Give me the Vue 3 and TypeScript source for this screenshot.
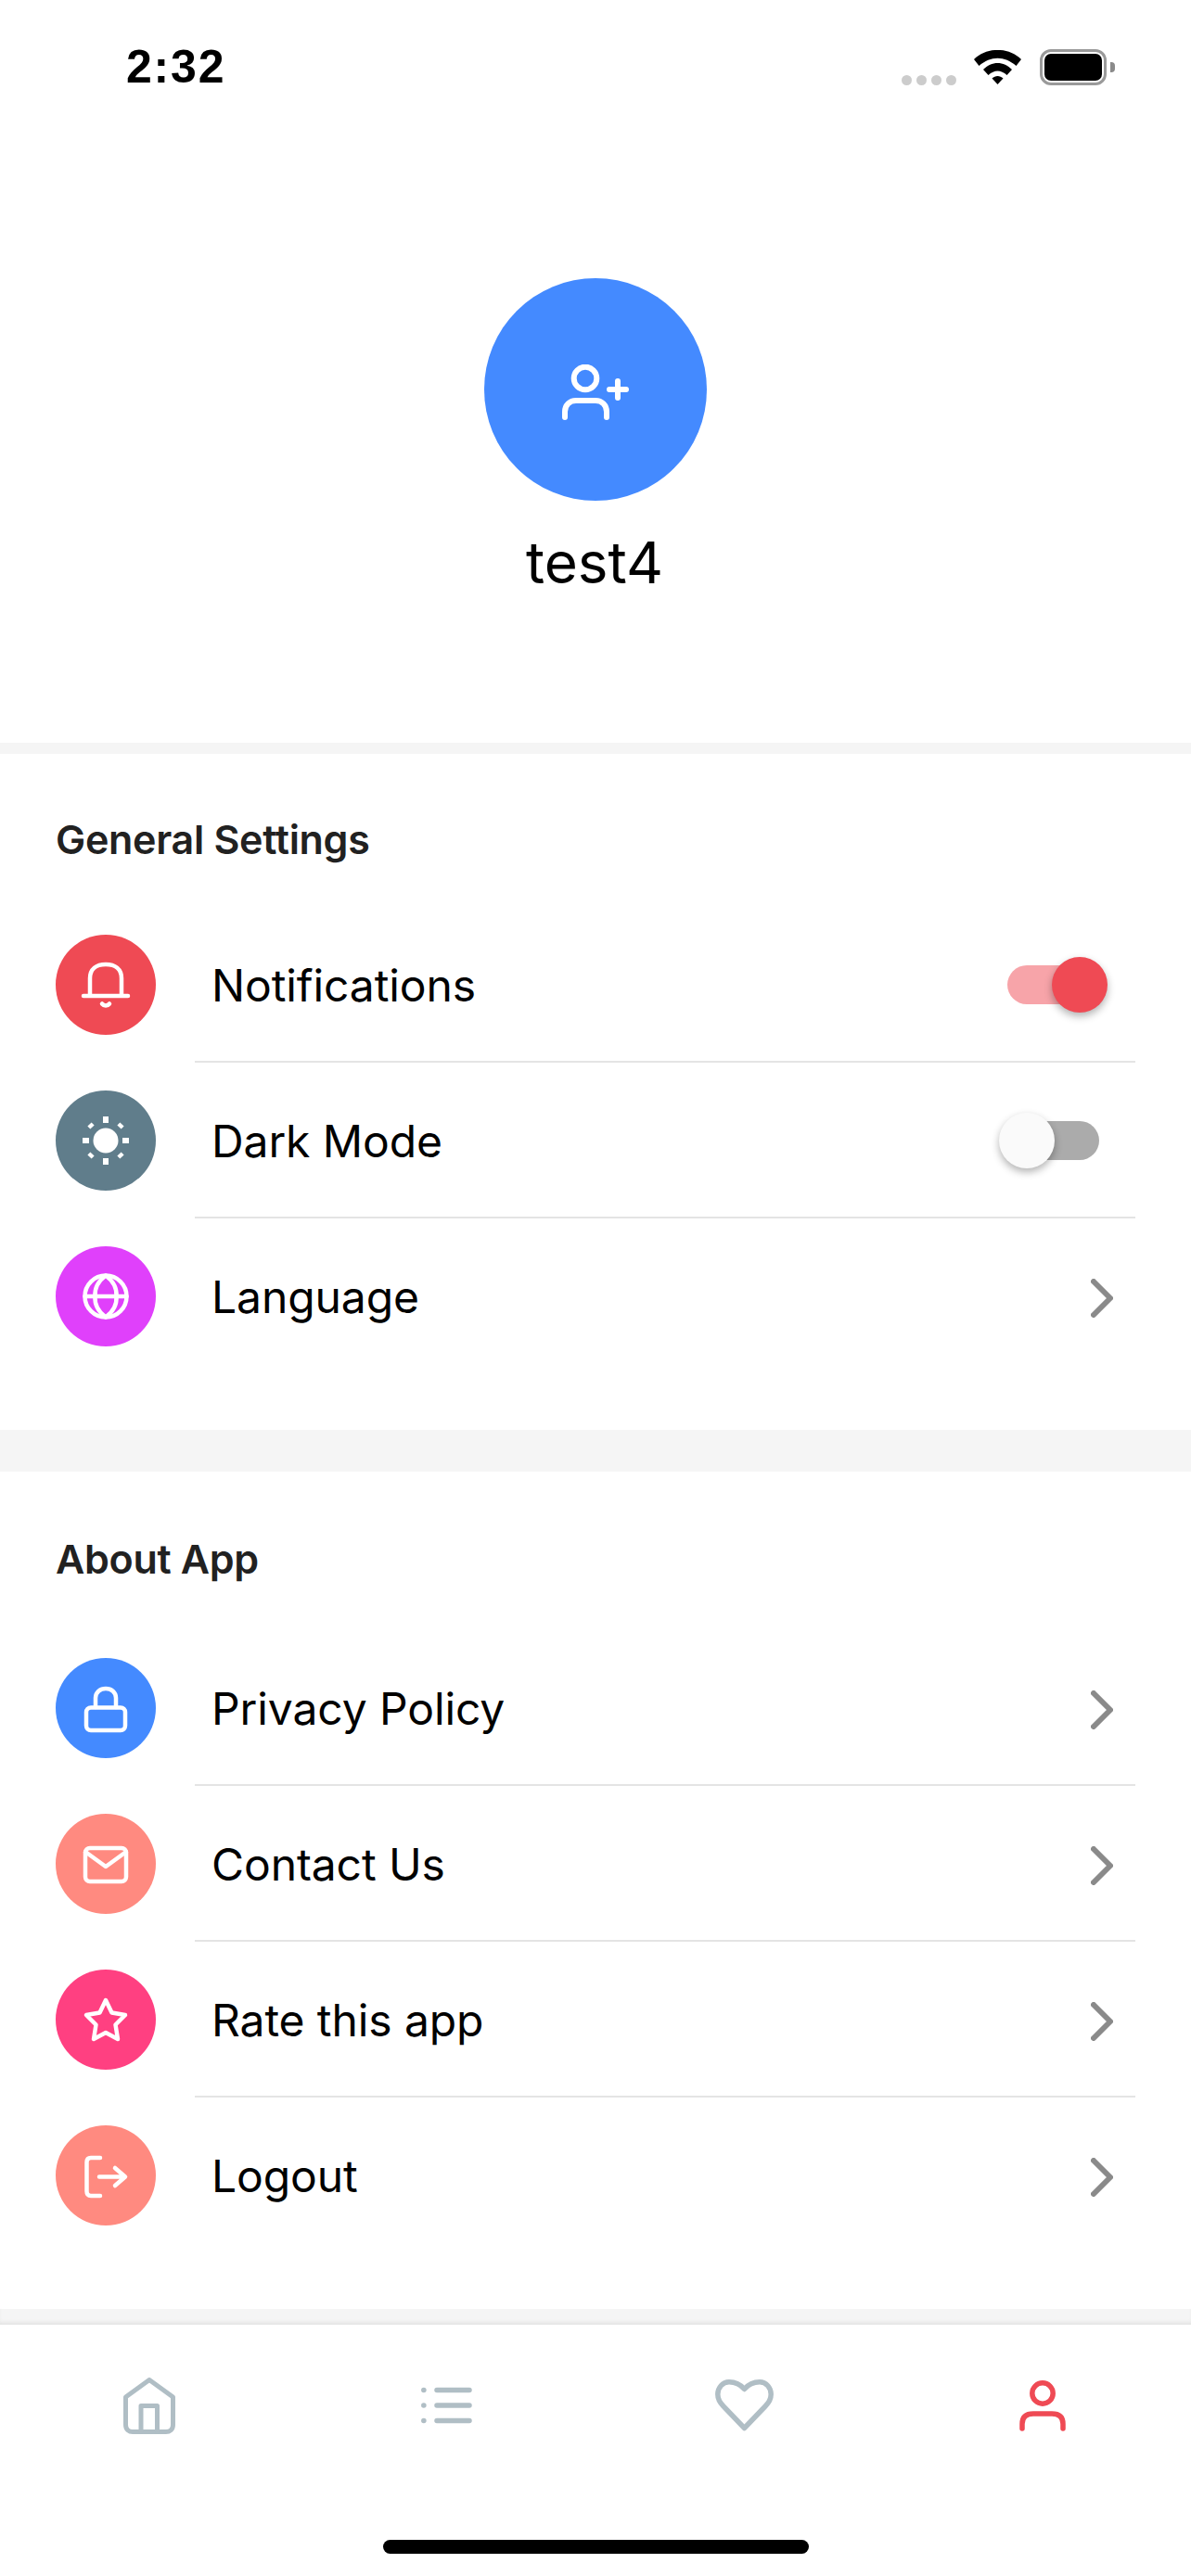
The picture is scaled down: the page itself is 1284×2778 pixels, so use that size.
<script setup lang="ts">
type Row = { label: string; color: string; icon: string; control: 'on' | 'off' | 'chevron' }

const generalRows: Row[] = [
  { label: 'Notifications', color: '#ef4a54', icon: 'bell', control: 'on' },
  { label: 'Dark Mode', color: '#607d8b', icon: 'sun', control: 'off' },
  { label: 'Language', color: '#e040fb', icon: 'globe', control: 'chevron' },
]
const aboutRows: Row[] = [
  { label: 'Privacy Policy', color: '#448aff', icon: 'lock', control: 'chevron' },
  { label: 'Contact Us', color: '#ff8a80', icon: 'mail', control: 'chevron' },
  { label: 'Rate this app', color: '#ff4081', icon: 'star', control: 'chevron' },
  { label: 'Logout', color: '#ff8a80', icon: 'logout', control: 'chevron' },
]
const sections = [
  { title: 'General Settings', rows: generalRows },
  { title: 'About App', rows: aboutRows },
]
</script>

<template>
  <div class="screen">
    <div class="status">
      <span class="time">2:32</span>
      <div class="status-icons">
        <div class="signal"><i></i><i></i><i></i><i></i></div>
        <svg class="wifi" width="51" height="37" viewBox="0 0 51 37">
          <path d="M0 10C14 -3.500 37 -3.500 51 10L45.500 17C33 6 18 6 5.500 17Z" fill="#000" />
          <path d="M10 21C19 11.500 32 11.500 41 21L35.500 27C29 21 22 21 15.500 27Z" fill="#000" />
          <path d="M19.500 30.500C23 27 28 27 31.500 30.500L25.500 37Z" fill="#000" />
        </svg>
        <div class="battery"><div class="battery-fill"></div></div>
        <div class="battery-cap"></div>
      </div>
    </div>

    <header class="profile">
      <div class="avatar">
        <svg class="avatar-icon" width="72" height="60" viewBox="0 0 72 60" fill="none" stroke="#fff" stroke-width="6" stroke-linecap="round">
          <circle cx="25" cy="15" r="12.300" />
          <path d="M3 57V51C3 44 8 39 15 39H36C43 39 48 44 48 51V57" />
          <path d="M60 18V36M51 27H69" />
        </svg>
      </div>
      <div class="name">test4</div>
    </header>

    <div class="band band-thin"></div>

    <template v-for="(section, si) in sections" :key="section.title">
      <section class="section" :class="{ 'section-about': si === 1 }">
        <h2 class="title">{{ section.title }}</h2>
        <div class="rows">
          <div v-for="(row, ri) in section.rows" :key="row.label" class="row">
            <div class="badge" :style="{ background: row.color }">
              <svg width="54" height="54" viewBox="0 0 54 54" fill="none" stroke="#fff" stroke-width="4.500" stroke-linecap="round" stroke-linejoin="round">
                <template v-if="row.icon === 'bell'">
                  <path d="M3 39H51M10 39V20C10 10 17 5 27 5C37 5 44 10 44 20V39" />
                  <path d="M23 47.500C25 50 29 50 31 47.500" />
                </template>
                <template v-else-if="row.icon === 'sun'">
                  <circle cx="27" cy="27" r="13.500" fill="#fff" stroke="none" />
                  <path d="M27 1V8M27 46V53M2 27H9M45 27H52M9.500 9.500L12.500 12.500M41.500 41.500L44.500 44.500M9.500 44.500L12.500 41.500M41.500 12.500L44.500 9.500" stroke-linecap="butt" stroke-width="6" />
                </template>
                <template v-else-if="row.icon === 'globe'">
                  <circle cx="27" cy="27" r="22.500" />
                  <path d="M27 4.500C17 12 15 20 15.500 27C15 34 17 42 27 49.500C37 42 39 34 38.500 27C39 20 37 12 27 4.500Z" />
                  <path d="M4.500 27H49.500" />
                </template>
                <template v-else-if="row.icon === 'lock'">
                  <rect x="6" y="26.500" width="42" height="24.500" rx="5" />
                  <path d="M16 26V16C16 10 21 6 27 6C33 6 38 10 38 16V26" />
                </template>
                <template v-else-if="row.icon === 'mail'">
                  <rect x="5" y="10" width="44" height="36" rx="5" />
                  <path d="M5 14L27 30L49 14" />
                </template>
                <template v-else-if="row.icon === 'star'">
                  <path d="M27 6L33.500 19.500L48 22L37.500 32.500L40 48L27 41L14 48L16.500 32.500L6 22L20.500 19.500Z" />
                </template>
                <template v-else>
                  <path d="M21 8H11C8 8 6.500 10 6.500 13V44C6.500 47 8 49 11 49H21" />
                  <path d="M20 28.500H47M37 19L48 28.500L37 38" />
                </template>
              </svg>
            </div>
            <div class="row-body" :class="{ 'no-line': ri === section.rows.length - 1 }">
              <span class="label">{{ row.label }}</span>
              <div v-if="row.control !== 'chevron'" class="switch" :class="row.control">
                <div class="knob"></div>
              </div>
              <svg v-else class="chevron" width="24" height="42" viewBox="0 0 24 42" fill="none" stroke="#8a8a8a" stroke-width="6" stroke-linecap="round" stroke-linejoin="round">
                <path d="M3 3L21 21L3 39" />
              </svg>
            </div>
          </div>
        </div>
      </section>
      <div v-if="si === 0" class="band band-wide"></div>
    </template>

    <div class="band band-foot"></div>

    <nav class="tabs">
      <div class="tab">
        <svg width="56" height="61" viewBox="0 0 56 61" fill="none" stroke="#b0bec5" stroke-width="5" stroke-linecap="round" stroke-linejoin="round">
          <path d="M2.500 21L28 2.500L53.500 21V51C53.500 56 50 58.500 46 58.500H10C6 58.500 2.500 56 2.500 51Z" />
          <path d="M19 58V30.500H36.500V58" />
        </svg>
      </div>
      <div class="tab">
        <svg width="56" height="40" viewBox="0 0 56 40" fill="none" stroke="#b0bec5" stroke-width="5.500" stroke-linecap="round">
          <path d="M17 3.500H52M17 20H52M17 36.500H52" />
          <path d="M2.800 3.500H2.900M2.800 20H2.900M2.800 36.500H2.900" />
        </svg>
      </div>
      <div class="tab">
        <svg width="63" height="56" viewBox="0 0 63 56" fill="none" stroke="#b0bec5" stroke-width="5.500" stroke-linejoin="round">
          <path d="M31.500 10.500C26 4 19 2.800 15 2.800C8 2.800 2.800 9 2.800 16C2.800 21 5 25 9 29L31.500 52.500L54 29C58 25 60.200 21 60.200 16C60.200 9 55 2.800 48 2.800C44 2.800 37 4 31.500 10.500Z" />
        </svg>
      </div>
      <div class="tab">
        <svg width="50" height="55" viewBox="0 0 50 55" fill="none" stroke="#ef4a54" stroke-width="5.500" stroke-linecap="round">
          <circle cx="25" cy="14" r="11.200" />
          <path d="M3 52V47C3 39 8 36 15 36H35C42 36 47 39 47 47V52" />
        </svg>
      </div>
    </nav>
    <div class="home-zone"><div class="home-bar"></div></div>
  </div>
</template>

<style>
html, body { margin: 0; background: #fff; }
</style>

<style scoped>
.screen {
  width: 1284px;
  height: 2778px;
  background: #fff;
  font-family: Inter, "Noto Sans", sans-serif;
  display: flex;
  flex-direction: column;
  overflow: hidden;
}
.status {
  height: 144px;
  flex: none;
  box-sizing: border-box;
  padding: 44px 0 0 136px;
  display: flex;
  justify-content: space-between;
  align-items: flex-start;
}
.time {
  font: 700 50px/56px "Liberation Sans", sans-serif;
  color: #000;
  letter-spacing: 1.800px;
}
.status-icons {
  display: flex;
  align-items: flex-start;
  padding: 9px 82px 0 0;
}
.signal { display: flex; gap: 5px; margin: 28px 19px 0 0; }
.signal i { width: 11px; height: 11px; border-radius: 50%; background: #ccc; }
.wifi { margin: 1px 20px 0 0; }
.battery {
  box-sizing: border-box;
  width: 72px;
  height: 39px;
  border: 3px solid #9a9a9a;
  border-radius: 12px;
  padding: 2px;
}
.battery-fill { width: 100%; height: 100%; background: #000; border-radius: 7px; }
.battery-cap { width: 5px; height: 11px; margin: 14px 0 0 4px; background: #8a8a8a; border-radius: 0 4px 4px 0; }

.profile {
  height: 657px;
  flex: none;
  box-sizing: border-box;
  padding-top: 156px;
  display: flex;
  flex-direction: column;
  align-items: center;
}
.avatar {
  width: 240px;
  height: 240px;
  border-radius: 50%;
  background: #448aff;
  display: flex;
  align-items: center;
  justify-content: center;
}
.avatar-icon { margin-top: 6px; }
.name {
  margin: 33px 2px 0 0;
  font-size: 62px;
  line-height: 68px;
  font-weight: 400;
  color: #000;
}

.band { background: #f5f5f5; flex: none; }
.band-thin { height: 12px; }
.band-wide { height: 45px; }
.band-foot { height: 17px; box-shadow: inset 0 -4px 4px -2px #e0e0e0; }

.section { flex: none; padding: 66px 0 0 60px; height: 729px; box-sizing: border-box; }
.section-about { height: 903px; padding-top: 68px; }
.title {
  margin: 0 0 47px;
  font-size: 43px;
  line-height: 52px;
  font-weight: 600;
  color: #212121;
  letter-spacing: -0.300px;
}
.section-about .title { margin-bottom: 51px; }
.rows { display: flex; flex-direction: column; }
.row { display: flex; align-items: center; height: 168px; }
.badge {
  width: 108px;
  height: 108px;
  border-radius: 50%;
  display: flex;
  align-items: center;
  justify-content: center;
  flex: none;
}
.row-body {
  align-self: stretch;
  margin-left: 42px;
  width: 1014px;
  box-sizing: border-box;
  padding: 0 24px 0 18px;
  border-bottom: 2px solid #e4e4e4;
  display: flex;
  align-items: center;
  justify-content: space-between;
  position: relative;
}
.row-body.no-line { border-bottom-color: transparent; }
.label { font-size: 48px; font-weight: 400; color: #000; line-height: 60px; padding-top: 4px; letter-spacing: -0.100px; }
.switch {
  position: absolute;
  left: 876px;
  top: 63px;
  width: 99px;
  height: 42px;
  border-radius: 21px;
}
.switch.on { background: #f7a4a9; }
.switch.off { background: #ababab; }
.knob {
  position: absolute;
  top: -9px;
  width: 60px;
  height: 60px;
  border-radius: 50%;
  box-shadow: 0 4px 8px rgba(0, 0, 0, 0.3);
}
.on .knob { right: -9px; background: #ef4a54; }
.off .knob { left: -9px; background: #fafafa; }
.chevron { margin-top: 5px; }

.tabs {
  flex: 1;
  display: grid;
  grid-template-columns: repeat(4, 1fr);
  padding-top: 5px;
}
.tab { display: flex; justify-content: center; align-items: center; }
.home-zone { height: 102px; flex: none; display: flex; justify-content: center; }
.home-bar { width: 459px; height: 15px; margin-top: 63px; background: #000; border-radius: 8px; }
</style>
